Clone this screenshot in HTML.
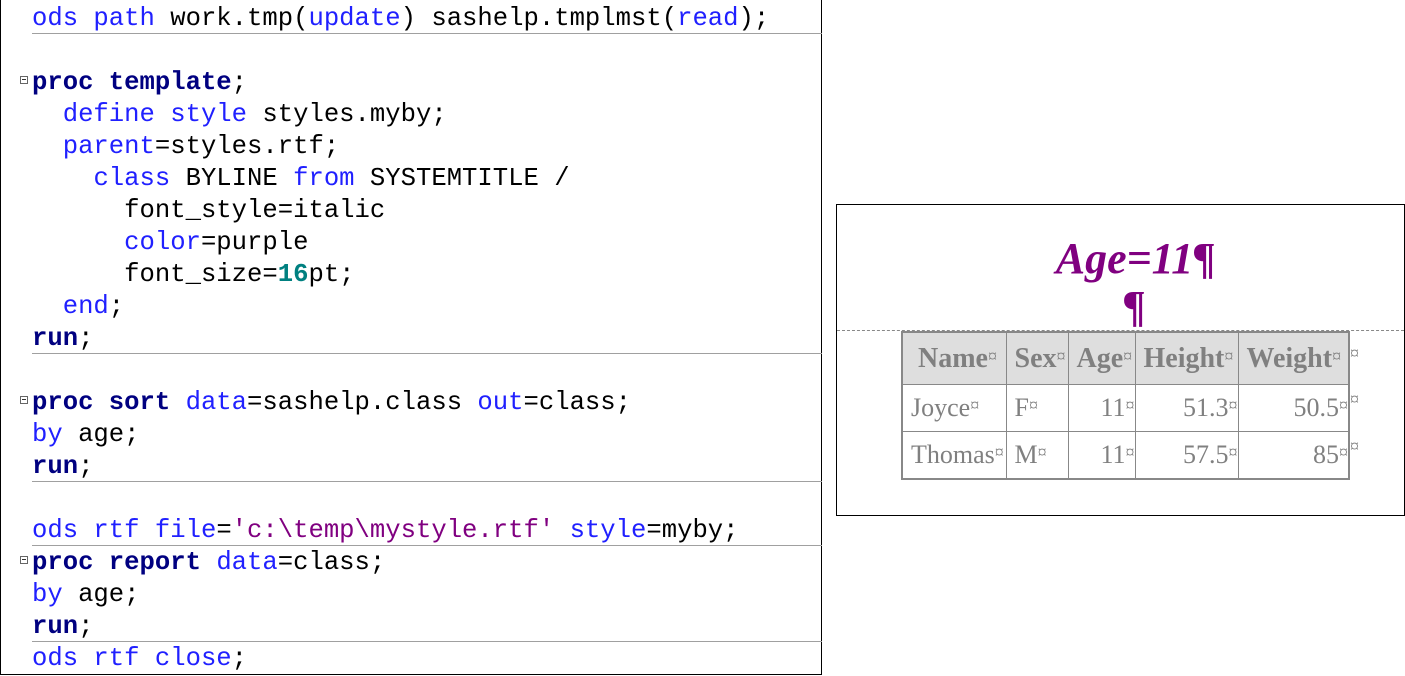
<!DOCTYPE html>
<html><head><meta charset="utf-8"><style>
html,body{margin:0;padding:0;background:#fff;}
body{width:1405px;height:676px;position:relative;overflow:hidden;}
#code{position:absolute;left:0;top:0;width:820px;height:674px;border:1px solid #000;border-top:none;}
.l{position:absolute;left:31px;height:32px;line-height:32px;font-family:"Liberation Mono",monospace;font-size:25.6px;white-space:pre;color:#000;}
.b{color:#2020ff}.k{color:#000080;font-weight:bold}.s{color:#800080}.n{color:#008080;font-weight:bold}
.sep{position:absolute;left:31px;width:790px;height:1px;background:#a0a0a0;}
.fold{position:absolute;left:19px;width:6px;height:6px;border:1px solid #666;}
.fold:after{content:"";position:absolute;left:1px;top:2px;width:4px;height:1px;background:#333;}
#doc{position:absolute;left:836px;top:204px;width:567px;height:310px;border:1px solid #000;}
.t{font-family:"Liberation Serif",serif;}
#title{position:absolute;left:0;width:597px;top:28px;text-align:center;color:#800080;font-weight:bold;font-style:italic;font-size:44px;}
#pil{position:absolute;left:285px;top:76px;color:#800080;font-weight:bold;font-size:44px;}
#dash{position:absolute;left:0;top:125px;width:567px;border-top:1px dashed #888;}
table{position:absolute;left:64px;top:126px;border-collapse:collapse;table-layout:fixed;width:447px;border:2px solid #888;font-family:"Liberation Serif",serif;font-size:26px;color:#808080;}
td{border:1px solid #888;padding:0 0 0 8px;height:46px;white-space:nowrap;overflow:hidden;}
tr.h td{background:#dedede;font-weight:bold;height:51px;font-size:28px;padding-left:8px;}
.r{text-align:right;padding:0;}
.cur{font-size:18px;vertical-align:5px;font-weight:normal;}
.out{position:absolute;left:513px;font-family:"Liberation Serif",serif;font-size:18px;color:#808080;}
</style></head><body>
<div id="code">
<div class="l" style="top:3px"><span class="b">ods path</span> work.tmp(<span class="b">update</span>) sashelp.tmplmst(<span class="b">read</span>);</div>
<div class="sep" style="top:33px"></div>
<div class="fold" style="top:76px"></div>
<div class="l" style="top:67px"><span class="k">proc template</span>;</div>
<div class="l" style="top:99px">  <span class="b">define style</span> styles.myby;</div>
<div class="l" style="top:131px">  <span class="b">parent</span>=styles.rtf;</div>
<div class="l" style="top:163px">    <span class="b">class</span> BYLINE <span class="b">from</span> SYSTEMTITLE /</div>
<div class="l" style="top:195px">      font_style=italic</div>
<div class="l" style="top:227px">      <span class="b">color</span>=purple</div>
<div class="l" style="top:259px">      font_size=<span class="n">16</span>pt;</div>
<div class="l" style="top:291px">  <span class="b">end</span>;</div>
<div class="l" style="top:323px"><span class="k">run</span>;</div>
<div class="sep" style="top:353px"></div>
<div class="fold" style="top:396px"></div>
<div class="l" style="top:387px"><span class="k">proc sort</span> <span class="b">data</span>=sashelp.class <span class="b">out</span>=class;</div>
<div class="l" style="top:419px"><span class="b">by</span> age;</div>
<div class="l" style="top:451px"><span class="k">run</span>;</div>
<div class="sep" style="top:481px"></div>
<div class="l" style="top:515px"><span class="b">ods rtf file</span>=<span class="s">'c:\temp\mystyle.rtf'</span> <span class="b">style</span>=myby;</div>
<div class="sep" style="top:545px"></div>
<div class="fold" style="top:556px"></div>
<div class="l" style="top:547px"><span class="k">proc report</span> <span class="b">data</span>=class;</div>
<div class="l" style="top:579px"><span class="b">by</span> age;</div>
<div class="l" style="top:611px"><span class="k">run</span>;</div>
<div class="sep" style="top:641px"></div>
<div class="l" style="top:643px"><span class="b">ods rtf close</span>;</div>
</div>
<div id="doc">
<div id="title" class="t">Age=11¶</div>
<div id="pil" class="t">¶</div>
<div id="dash"></div>
<table>
<colgroup><col style="width:104px"><col style="width:62px"><col style="width:67px"><col style="width:103px"><col style="width:111px"></colgroup>
<tr class="h"><td style="padding-left:15px">Name<span class="cur">¤</span></td><td>Sex<span class="cur">¤</span></td><td>Age<span class="cur">¤</span></td><td>Height<span class="cur">¤</span></td><td>Weight<span class="cur">¤</span></td></tr>
<tr><td>Joyce<span class="cur">¤</span></td><td>F<span class="cur">¤</span></td><td class="r">11<span class="cur">¤</span></td><td class="r">51.3<span class="cur">¤</span></td><td class="r">50.5<span class="cur">¤</span></td></tr>
<tr><td>Thomas<span class="cur">¤</span></td><td>M<span class="cur">¤</span></td><td class="r">11<span class="cur">¤</span></td><td class="r">57.5<span class="cur">¤</span></td><td class="r">85<span class="cur">¤</span></td></tr>
</table>
<div class="out" style="top:138px">¤</div>
<div class="out" style="top:184px">¤</div>
<div class="out" style="top:231px">¤</div>
</div>
</body></html>
